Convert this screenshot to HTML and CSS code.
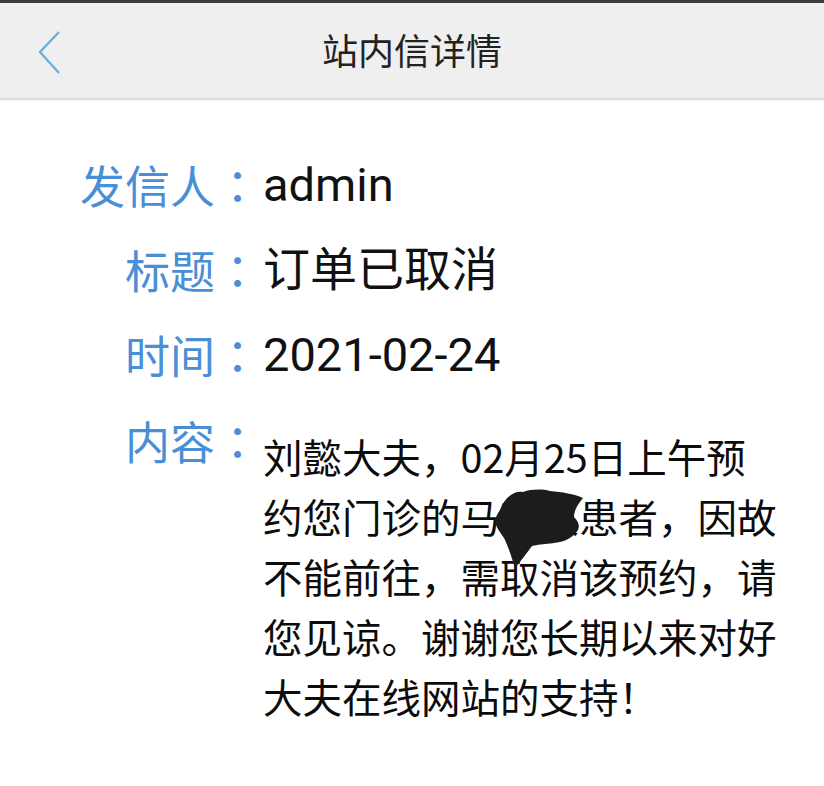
FILE: index.html
```html
<!DOCTYPE html>
<html lang="zh-CN">
<head>
<meta charset="utf-8">
<title>站内信详情</title>
<link rel="stylesheet" href="styles.css">
</head>
<body>
<div class="topline"></div>
<header class="header">
  <a class="back" href="#" aria-label="返回">
    <svg width="40" height="50" viewBox="0 0 40 50"><polyline points="21,5 2,25 21,46" fill="none" stroke="#6cb0dc" stroke-width="2.4" stroke-linejoin="miter"/></svg>
  </a>
  <h1 class="title">站内信详情</h1>
</header>
<main class="detail">
  <div class="row">
    <div class="label">发信人<span class="colon" lang="zh-TW">：</span></div>
    <div class="value">admin</div>
  </div>
  <div class="row">
    <div class="label">标题<span class="colon" lang="zh-TW">：</span></div>
    <div class="value">订单已取消</div>
  </div>
  <div class="row">
    <div class="label">时间<span class="colon" lang="zh-TW">：</span></div>
    <div class="value">2021-02-24</div>
  </div>
  <div class="row row-content">
    <div class="label label-content">内容<span class="colon" lang="zh-TW">：</span></div>
    <div class="content">刘懿大夫，02月25日上午预约您门诊的马某某患者，因故不能前往，需取消该预约，请您见谅。谢谢您长期以来对好大夫在线网站的支持！
      <svg class="blot" width="100" height="90" viewBox="0 0 100 90"><path d="M10 30 C 14 18, 24 10, 33 12 C 42 9, 52 9, 60 11 C 72 12, 84 14, 93 18 C 88 24, 84 30, 84 37 C 88 41, 90 45, 88 50 C 84 56, 78 60, 70 62 C 60 64, 50 64, 42 66 C 36 74, 30 82, 25 88 C 22 78, 18 66, 14 58 C 10 52, 5 46, 5 40 C 6 36, 8 33, 10 30 Z" fill="#1c1c1c"/></svg>
    </div>
  </div>
</main>
</body>
</html>
```

FILE: styles.css
```css
html, body {
  margin: 0;
  padding: 0;
  background: #ffffff;
}
body {
  font-family: Roboto, "Noto Sans CJK SC", sans-serif;
  width: 824px;
  min-height: 786px;
}
.topline {
  height: 3px;
  background: #3c3c3c;
}
.header {
  position: relative;
  height: 95px;
  background: #efefef;
  border-bottom: 2px solid #dcdcdc;
  box-shadow: 0 1px 2px rgba(0,0,0,0.05);
  display: flex;
  align-items: center;
  justify-content: center;
}
.back {
  position: absolute;
  left: 38px;
  top: 24px;
  display: block;
  width: 40px;
  height: 50px;
}
.back svg {
  display: block;
}
.title {
  margin: 0;
  font-family: "Noto Sans CJK SC", sans-serif;
  font-weight: 400;
  font-size: 36px;
  color: #222222;
  line-height: 1;
  position: relative;
  top: -2px;
}
.detail {
  padding-top: 42px;
}
.row {
  display: grid;
  grid-template-columns: 260px 540px;
  column-gap: 3px;
  align-items: center;
  height: 85px;
}
.label {
  font-family: "Noto Sans CJK SC", sans-serif;
  font-size: 45px;
  line-height: 85px;
  color: #4a8ed7;
  text-align: right;
  white-space: nowrap;
}
.colon {
  font-family: "Noto Sans CJK TC", "Noto Sans CJK JP", sans-serif;
}
.value {
  font-size: 47px;
  line-height: 85px;
  color: #111111;
  white-space: nowrap;
}
.row-content {
  height: auto;
  align-items: start;
}
.label-content {
  line-height: 60px;
  padding-top: 14px;
}
.content {
  position: relative;
  font-family: "Noto Sans CJK SC", sans-serif;
  font-size: 39.5px;
  line-height: 60px;
  color: #0c0c0c;
  width: 516px;
  padding-top: 29px;
}
.blot {
  position: absolute;
  left: 227px;
  top: 83px;
}
```
